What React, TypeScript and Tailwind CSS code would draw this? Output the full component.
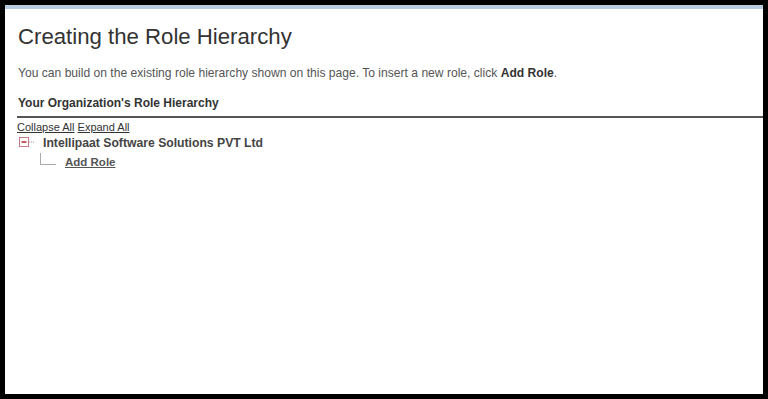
export default function App() {
  return (
    <div className="h-[399px] w-[768px] bg-black pl-[5px] pt-[5px] pr-[5px] pb-[5px] font-['Liberation_Sans',Arial,sans-serif]">
      <div className="flex h-[389px] w-[758px] flex-col bg-white">
        <div className="h-[4px] bg-[#b7c9de]" />
        <div className="flex flex-col pl-[13px]">
          <h1 className="mt-[14px] text-[22.2px] leading-[28px] text-[#333]">Creating the Role Hierarchy</h1>
          <p className="mt-[15px] text-[12.1px] leading-[14px] text-[#555]">
            You can build on the existing role hierarchy shown on this page. To insert a new role, click{" "}
            <b className="text-[#333]">Add Role</b>.
          </p>
          <h2 className="mt-[15px] text-[12px] font-bold leading-[16px] text-[#333]">
            Your Organization's Role Hierarchy
          </h2>
          <div className="-ml-[1px] mt-[5px] h-[2px] bg-[#555]" />
          <div className="-ml-[1px] mt-[3px] text-[11px] leading-[13px] text-[#333]">
            <a className="underline">Collapse All</a> <a className="underline">Expand All</a>
          </div>
          <div className="mt-[1px] flex items-center pl-[1px]">
            <svg width="22" height="14" viewBox="0 0 22 14">
              <rect x="0.5" y="1.5" width="9" height="9" fill="#fff" stroke="#c57b88" />
              <line x1="2.5" y1="6" x2="7.5" y2="6" stroke="#c0202f" strokeWidth="1.5" />
              <line x1="10" y1="6" x2="16" y2="6" stroke="#999" strokeDasharray="1 1" />
            </svg>
            <span className="ml-[2px] text-[12.2px] font-bold leading-[16px] text-[#444]">
              Intellipaat Software Solutions PVT Ltd
            </span>
          </div>
          <div className="mt-[2px] flex items-end pl-[22px]">
            <svg width="18" height="12" viewBox="0 0 18 12" className="mb-[4px]">
              <line x1="0.5" y1="0" x2="0.5" y2="11.5" stroke="#aaa" />
              <line x1="0" y1="11.5" x2="16" y2="11.5" stroke="#aaa" />
            </svg>
            <a className="ml-[7px] text-[11.5px] font-bold leading-[14px] text-[#555] underline">Add Role</a>
          </div>
        </div>
      </div>
    </div>
  );
}
